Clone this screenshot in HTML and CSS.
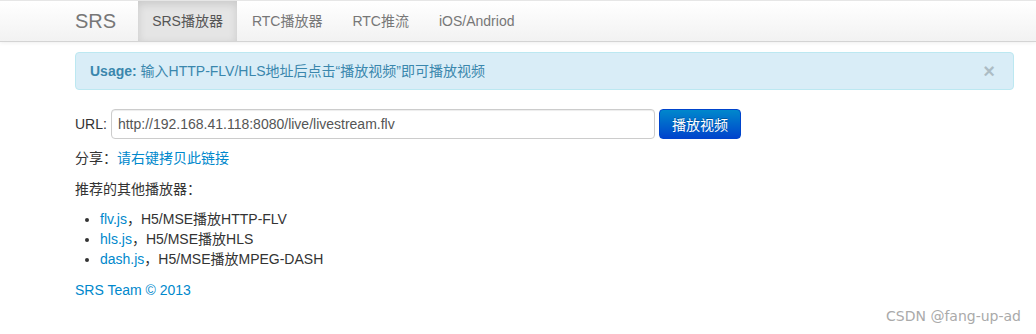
FILE: index.html
```html
<!DOCTYPE html>
<html>
<head>
<meta charset="utf-8">
<link rel="stylesheet" href="styles.css">
</head>
<body>
<div class="navbar">
  <div class="nav-inner">
    <span class="brand">SRS</span>
    <ul class="nav">
      <li class="active"><a>SRS播放器</a></li>
      <li><a>RTC播放器</a></li>
      <li><a>RTC推流</a></li>
      <li><a>iOS/Andriod</a></li>
    </ul>
  </div>
</div>
<div class="container">
  <div class="alert">
    <span><strong>Usage:</strong> 输入HTTP-FLV/HLS地址后点击“播放视频”即可播放视频</span>
    <span class="close">×</span>
  </div>
  <div class="form-row">
    <label>URL:</label>
    <input class="url" type="text" value="http://192.168.41.118:8080/live/livestream.flv">
    <button class="btn">播放视频</button>
  </div>
  <p class="share">分享：<a>请右键拷贝此链接</a></p>
  <p class="rec">推荐的其他播放器：</p>
  <ul class="list">
    <li><a>flv.js</a>，H5/MSE播放HTTP-FLV</li>
    <li><a>hls.js</a>，H5/MSE播放HLS</li>
    <li><a>dash.js</a>，H5/MSE播放MPEG-DASH</li>
  </ul>
  <p class="footer"><a>SRS Team © 2013</a></p>
</div>
<div class="watermark">CSDN @fang-up-ad</div>
</body>
</html>
```
FILE: styles.css
```css
html, body { margin: 0; padding: 0; }
body {
  font-family: "Liberation Sans", Arial, "Noto Sans CJK SC", sans-serif;
  font-size: 14px;
  line-height: 20px;
  color: #333;
  background: #fff;
  height: 334px;
  position: relative;
  overflow: hidden;
}
a { color: #0088cc; text-decoration: none; }
.navbar {
  background: linear-gradient(to bottom, #ffffff, #f2f2f2);
  border-top: 1px solid #e6e6e6;
  border-bottom: 1px solid #d4d4d4;
  box-shadow: 0 1px 4px rgba(0,0,0,0.065);
  height: 40px;
}
.nav-inner {
  display: flex;
  align-items: stretch;
  height: 40px;
  padding-left: 75px;
}
.brand {
  font-size: 20px;
  color: #777;
  line-height: 40px;
  margin-right: 22px;
}
.nav {
  display: flex;
  margin: 0;
  padding: 0;
  list-style: none;
}
.nav li a {
  display: block;
  padding: 0 15px;
  line-height: 40px;
  color: #777;
}
.nav li.active a {
  padding: 0 14px;
  background: #e5e5e5;
  color: #555;
  box-shadow: inset 0 3px 8px rgba(0,0,0,0.125);
}
.container {
  margin: 0 22px 0 75px;
}
.alert {
  margin-top: 10px;
  background: #d9edf7;
  border: 1px solid #bce8f1;
  border-radius: 4px;
  color: #3a87ad;
  padding: 8px 14px;
  display: flex;
  justify-content: space-between;
  align-items: center;
}
.alert strong { font-weight: bold; }
.close {
  font-size: 20px;
  font-weight: bold;
  color: #000;
  opacity: 0.2;
  margin-right: 4px;
}
.form-row {
  display: flex;
  align-items: center;
  margin-top: 19px;
}
.form-row label { margin-right: 4px; }
.url {
  width: 530px;
  height: 20px;
  padding: 4px 6px;
  border: 1px solid #ccc;
  border-radius: 4px;
  font-family: inherit;
  font-size: 14px;
  color: #555;
  box-shadow: inset 0 1px 1px rgba(0,0,0,0.075);
  margin: 0;
}
.btn {
  margin-left: 4px;
  height: 30px;
  padding: 0 12px;
  font-family: inherit;
  font-size: 14px;
  color: #fff;
  background: linear-gradient(to bottom, #0088cc, #0044cc);
  border: 1px solid #0044cc;
  border-radius: 4px;
  text-shadow: 0 -1px 0 rgba(0,0,0,0.25);
}
.share { margin: 9px 0 0; }
.rec { margin: 11px 0 10px; }
.list { margin: 0; padding-left: 25px; }
.footer { margin: 11px 0 0; }
.watermark {
  position: absolute;
  right: 15px;
  bottom: 8px;
  font-family: "DejaVu Sans", sans-serif;
  font-size: 14px;
  color: #aaa;
}
```
